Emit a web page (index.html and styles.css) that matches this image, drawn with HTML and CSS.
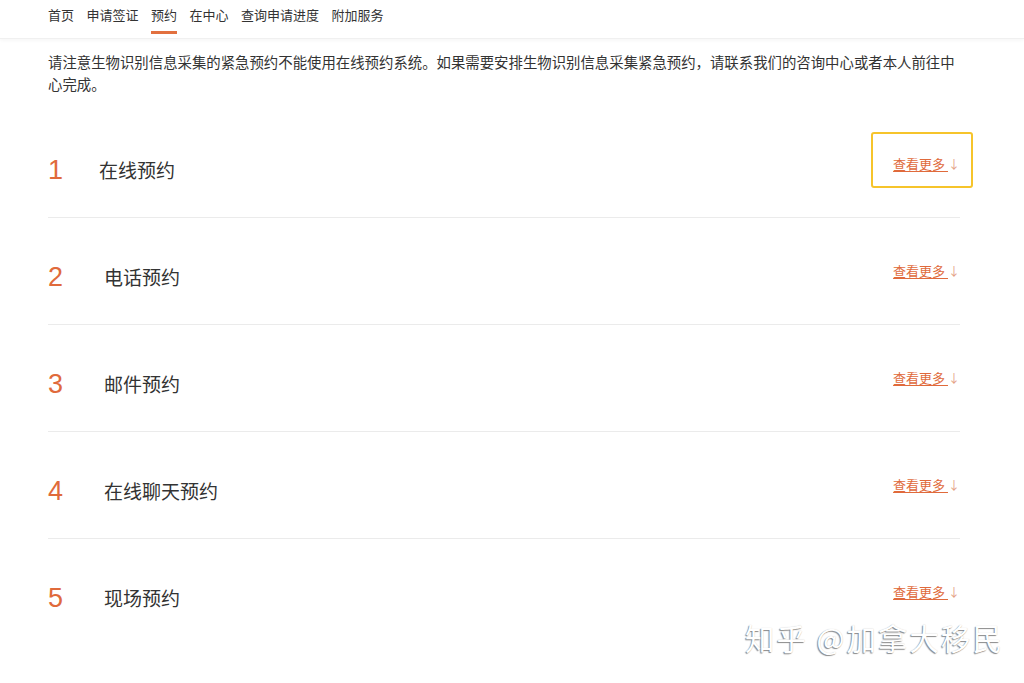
FILE: index.html
```html
<!DOCTYPE html>
<html lang="zh">
<head>
<meta charset="utf-8">
<link rel="stylesheet" href="styles.css">
</head>
<body>
<header class="header">
  <nav class="nav">
    <a class="nav-item">首页</a>
    <a class="nav-item">申请签证</a>
    <a class="nav-item active">预约</a>
    <a class="nav-item">在中心</a>
    <a class="nav-item">查询申请进度</a>
    <a class="nav-item">附加服务</a>
  </nav>
</header>
<main class="content">
  <p class="notice">请注意生物识别信息采集的紧急预约不能使用在线预约系统。如果需要安排生物识别信息采集紧急预约，请联系我们的咨询中心或者本人前往中心完成。</p>
  <ul class="list">
    <li class="row">
      <span class="num num-1">1</span>
      <span class="title">在线预约</span>
      <a class="more highlighted"><span class="more-text">查看更多 </span><span class="arrow">↓</span></a>
    </li>
    <li class="row">
      <span class="num">2</span>
      <span class="title">电话预约</span>
      <a class="more"><span class="more-text">查看更多 </span><span class="arrow">↓</span></a>
    </li>
    <li class="row">
      <span class="num">3</span>
      <span class="title">邮件预约</span>
      <a class="more"><span class="more-text">查看更多 </span><span class="arrow">↓</span></a>
    </li>
    <li class="row">
      <span class="num">4</span>
      <span class="title">在线聊天预约</span>
      <a class="more"><span class="more-text">查看更多 </span><span class="arrow">↓</span></a>
    </li>
    <li class="row last">
      <span class="num">5</span>
      <span class="title">现场预约</span>
      <a class="more"><span class="more-text">查看更多 </span><span class="arrow">↓</span></a>
    </li>
  </ul>
</main>
<div class="watermark">知乎 @加拿大移民</div>
</body>
</html>
```
FILE: styles.css
```css
html, body {
  margin: 0;
  padding: 0;
  background: #ffffff;
}
body {
  font-family: "Noto Sans CJK SC", "Noto Sans", sans-serif;
  color: #333;
  width: 1024px;
  height: 683px;
  overflow: hidden;
  position: relative;
}
.header {
  height: 38px;
  border-bottom: 1px solid #f0f0f0;
  box-shadow: 0 2px 3px rgba(0,0,0,0.03);
}
.nav {
  display: flex;
  gap: 12.5px;
  padding-left: 48px;
}
.nav-item {
  font-size: 13px;
  line-height: 18px;
  padding-top: 6px;
  height: 32px;
  box-sizing: border-box;
  color: #333;
  position: relative;
}
.nav-item.active::after {
  content: "";
  position: absolute;
  left: 0;
  right: 0;
  bottom: -2px;
  height: 3px;
  background: #e2703f;
}
.content {
  padding-left: 48px;
  width: 912px;
}
.notice {
  margin: 12px 0 0;
  font-size: 14.4px;
  line-height: 22px;
  color: #333;
}
.list {
  list-style: none;
  margin: 16px 0 0;
  padding: 0;
}
.row {
  display: flex;
  align-items: flex-start;
  height: 107px;
  box-sizing: border-box;
  padding-top: 40px;
  border-bottom: 1px solid #ebebeb;
}
.row.last {
  border-bottom: none;
}
.num {
  font-family: "Liberation Sans", Arial, sans-serif;
  font-size: 27px;
  line-height: 38px;
  color: #e06a3b;
  width: 56px;
}
.num-1 {
  width: 51px;
}
.title {
  font-size: 19px;
  line-height: 38px;
  color: #333;
  flex: 1;
}
.more {
  position: relative;
  margin-right: 0;
  margin-top: 6px;
  font-size: 13px;
  line-height: 14px;
  color: #e06a3b;
  white-space: pre;
}
.more-text {
  text-decoration: underline;
  text-underline-offset: 2px;
}
.arrow {
  color: #e4a085;
  font-size: 12px;
}
.more.highlighted::before {
  content: "";
  position: absolute;
  left: -22px;
  right: -13px;
  top: -25px;
  bottom: -17px;
  border: 2.5px solid #f6c42b;
  border-radius: 3px;
}
.watermark {
  position: absolute;
  left: 745px;
  top: 617px;
  font-size: 29.5px;
  line-height: 40px;
  letter-spacing: 2px;
  color: #ffffff;
  text-shadow: -1px 1px 1px rgba(0,0,0,0.45), 0 0 1px rgba(0,0,0,0.2);
}
```
